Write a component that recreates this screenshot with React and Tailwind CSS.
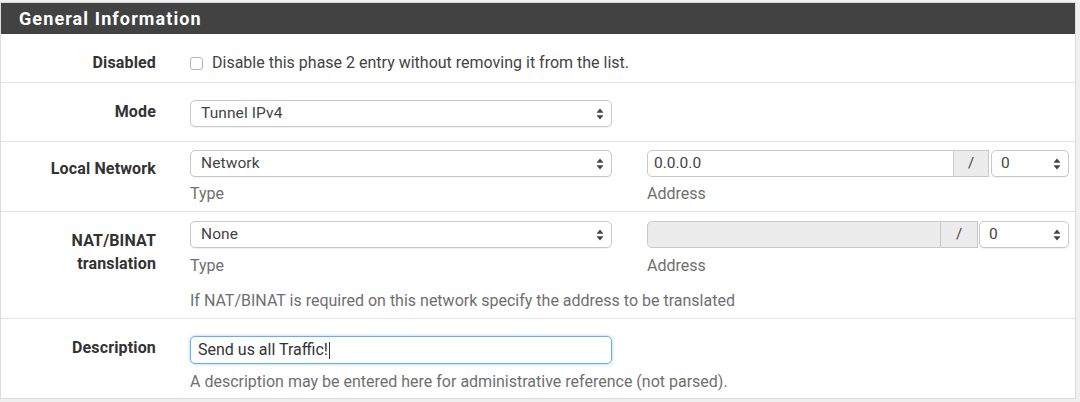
const FONT = { fontFamily: 'Roboto, "Liberation Sans", sans-serif' };

function Arrows() {
  return (
    <svg width="8" height="12" viewBox="0 0 8 12" className="shrink-0">
      <path d="M4 0.5 L7.5 4.8 L0.5 4.8 Z" fill="#444" />
      <path d="M4 11.5 L7.5 7.2 L0.5 7.2 Z" fill="#444" />
    </svg>
  );
}

function Select({ value, className = '' }) {
  return (
    <div className={`flex items-center justify-between h-[27px] border border-[#c8c8c8] rounded-[5px] bg-white pr-[7px] text-[15.5px] tracking-[0.1px] text-[#444] shadow-[0_1px_1px_rgba(0,0,0,0.06)] ${className}`}>
      <span>{value}</span>
      <Arrows />
    </div>
  );
}

function Row({ label, pt = 'pt-[19px]', children, last }) {
  return (
    <div className={`flex ${last ? '' : 'border-b border-[#e2e2e2]'}`}>
      <div className={`w-[155px] shrink-0 text-right font-bold text-[16px] tracking-[0.15px] leading-[23px] text-[#333] ${pt}`}>
        {label}
      </div>
      <div className="ml-[34px] flex-1">{children}</div>
    </div>
  );
}

function Hint({ children, className = '' }) {
  return <div className={`text-[16px] leading-[20px] text-[#6f6f6f] ${className}`}>{children}</div>;
}

export default function App() {
  return (
    <div className="w-[1080px] h-[402px] bg-[#f0f0f0] pt-[2px]" style={FONT}>
      <div className="w-[1076px] bg-white border-x border-b border-[#dcdcdc]">
        <div className="h-[32px] bg-[#424242] border-t border-[#d8d8d8] flex items-center pl-[18px] text-white font-bold text-[18px] tracking-[1.1px]">
          General Information
        </div>

        <Row label="Disabled" pt="pt-[17px]">
          <div className="h-[48px] flex items-center pt-[9px] text-[16px] text-[#444]">
            <span className="w-[13px] h-[13px] border border-[#b5b5b5] rounded-[3px] bg-white mt-[1px]" />
            <span className="ml-[9px]">Disable this phase 2 entry without removing it from the list.</span>
          </div>
        </Row>

        <Row label="Mode" pt="pt-[17px]">
          <div className="pt-[17px] pb-[14px]">
            <Select value="Tunnel IPv4" className="w-[422px] pl-[10px]" />
          </div>
        </Row>

        <Row label="Local Network" pt="pt-[15px]">
          <div className="flex gap-[35px] pt-[8px] pb-[7px]">
            <div className="w-[422px]">
              <Select value="Network" className="pl-[10px]" />
              <Hint className="mt-[7px]">Type</Hint>
            </div>
            <div className="w-[422px]">
              <div className="flex h-[27px]">
                <div className="w-[307px] border border-[#c8c8c8] rounded-l-[5px] flex items-center pl-[6px] text-[15.5px] text-[#444]">0.0.0.0</div>
                <div className="w-[35px] border-y border-r border-[#c8c8c8] bg-[#ececec] flex items-center justify-center text-[15px] text-[#444]">/</div>
                <Select value="0" className="ml-[2px] w-[78px] pl-[9px]" />
              </div>
              <Hint className="mt-[7px]">Address</Hint>
            </div>
          </div>
        </Row>

        <Row label={<>NAT/BINAT<br />translation</>} pt="pt-[17px]">
          <div className="pt-[9px] pb-[7px]">
            <div className="flex gap-[35px]">
              <div className="w-[422px]">
                <Select value="None" className="pl-[10px]" />
                <Hint className="mt-[8px]">Type</Hint>
              </div>
              <div className="w-[422px]">
                <div className="flex h-[27px]">
                  <div className="w-[294px] border border-[#c8c8c8] rounded-l-[5px] bg-[#ececec]" />
                  <div className="w-[37px] border-y border-r border-[#c8c8c8] bg-[#ececec] flex items-center justify-center text-[15px] text-[#444]">/</div>
                  <Select value="0" className="ml-[1px] w-[90px] pl-[9px]" />
                </div>
                <Hint className="mt-[8px]">Address</Hint>
              </div>
            </div>
            <Hint className="mt-[15px]">If NAT/BINAT is required on this network specify the address to be translated</Hint>
          </div>
        </Row>

        <Row label="Description" pt="pt-[17px]" last>
          <div className="pt-[17px] pb-[6px]">
            <div className="w-[422px] h-[28px] border border-[#66afe9] rounded-[5px] shadow-[0_0_3px_rgba(102,175,233,0.7)] flex items-center pl-[7px] text-[16px] text-[#333]">
              Send us all Traffic!<span className="w-px h-[17px] bg-[#333] ml-[1px]" />
            </div>
            <Hint className="mt-[8px]">A description may be entered here for administrative reference (not parsed).</Hint>
          </div>
        </Row>
      </div>
    </div>
  );
}
